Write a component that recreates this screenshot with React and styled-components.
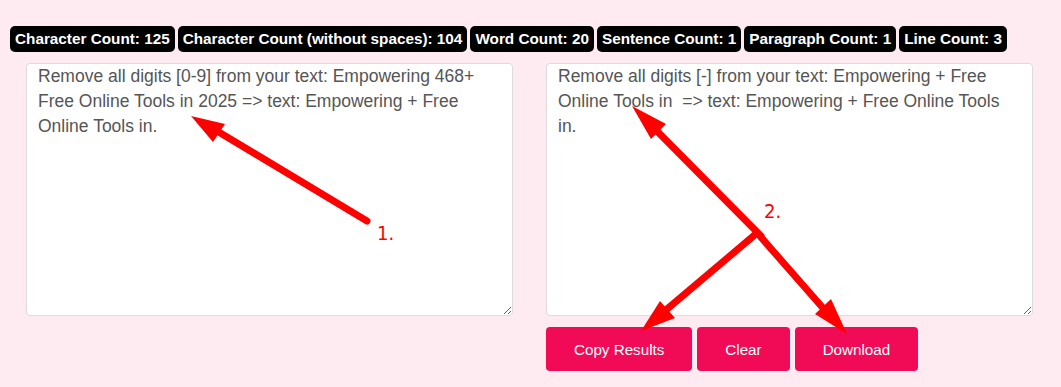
import React from "react";
import styled, { createGlobalStyle } from "styled-components";

const Global = createGlobalStyle`
  html, body { margin: 0; padding: 0; }
  body { background: #fdebf1; font-family: "Liberation Sans", Arial, sans-serif; }
`;

const Page = styled.div`
  position: relative;
  width: 1061px;
  min-height: 387px;
  padding-top: 26px;
  box-sizing: border-box;
  background: #fdebf1;
`;

const StatsBar = styled.div`
  display: flex;
  gap: 3px;
  padding-left: 10px;
`;

const Badge = styled.span`
  display: inline-flex;
  align-items: center;
  height: 26px;
  padding: 0 5px;
  background: #000;
  color: #fff;
  border-radius: 5px;
  font-family: "Liberation Sans", Arial, sans-serif;
  font-weight: 700;
  font-size: 15.3px;
  white-space: nowrap;
`;

const Columns = styled.div`
  display: grid;
  grid-template-columns: 487px 487px;
  column-gap: 33px;
  margin: 11px 0 0 26px;
`;

const Panel = styled.div`
  display: flex;
  flex-direction: column;
`;

const TextBox = styled.textarea`
  width: 487px;
  height: 253px;
  box-sizing: border-box;
  margin: 0;
  padding: 0 20px 0 11px;
  border: 1px solid #dcdcdc;
  border-radius: 4px;
  background: #fff;
  color: #555;
  font-family: "Liberation Sans", Arial, sans-serif;
  font-size: 17.5px;
  line-height: 25px;
  outline: none;
  overflow: hidden;
`;

const Actions = styled.div`
  display: flex;
  gap: 5px;
  margin-top: 11px;
`;

const Button = styled.button`
  height: 44px;
  padding: 0 28px;
  border: none;
  border-radius: 4px;
  background: #f10a55;
  color: #fff;
  font-family: "Liberation Sans", Arial, sans-serif;
  font-size: 15.2px;
  cursor: pointer;
`;

const Overlay = styled.svg`
  position: absolute;
  left: 0;
  top: 0;
  pointer-events: none;
`;

const Label = styled.text`
  font-family: "DejaVu Sans Condensed", "DejaVu Sans", sans-serif;
  font-size: 20px;
  fill: #ff0000;
`;

const stats = [
  "Character Count: 125",
  "Character Count (without spaces): 104",
  "Word Count: 20",
  "Sentence Count: 1",
  "Paragraph Count: 1",
  "Line Count: 3",
];

const inputText =
  "Remove all digits [0-9] from your text: Empowering 468+ Free Online Tools in 2025 => text: Empowering + Free Online Tools in.";
const outputText =
  "Remove all digits [-] from your text: Empowering + Free Online Tools in  => text: Empowering + Free Online Tools in.";

export default function App() {
  return (
    <Page>
      <Global />
      <StatsBar>
        {stats.map((s) => (
          <Badge key={s}>{s}</Badge>
        ))}
      </StatsBar>
      <Columns>
        <Panel>
          <TextBox readOnly value={inputText} />
        </Panel>
        <Panel>
          <TextBox readOnly value={outputText} />
          <Actions>
            <Button>Copy Results</Button>
            <Button>Clear</Button>
            <Button>Download</Button>
          </Actions>
        </Panel>
      </Columns>
      <Overlay width="1061" height="387" viewBox="0 0 1061 387">
        <g stroke="#ff0000" strokeWidth="7" strokeLinecap="round" fill="none">
          <line x1="367" y1="221" x2="212" y2="128" />
          <line x1="761" y1="236" x2="648" y2="122" />
          <line x1="757" y1="233" x2="660" y2="315" />
          <line x1="759" y1="235" x2="830" y2="316" />
        </g>
        <g fill="#ff0000">
          <polygon points="191,116 225,124 213,142" />
          <polygon points="632,106 666,124 651,139" />
          <polygon points="641,331 660,301 675,318" />
          <polygon points="847,334 815,314 831,299" />
        </g>
        <Label x="377" y="240">1.</Label>
        <Label x="764" y="218">2.</Label>
      </Overlay>
    </Page>
  );
}
